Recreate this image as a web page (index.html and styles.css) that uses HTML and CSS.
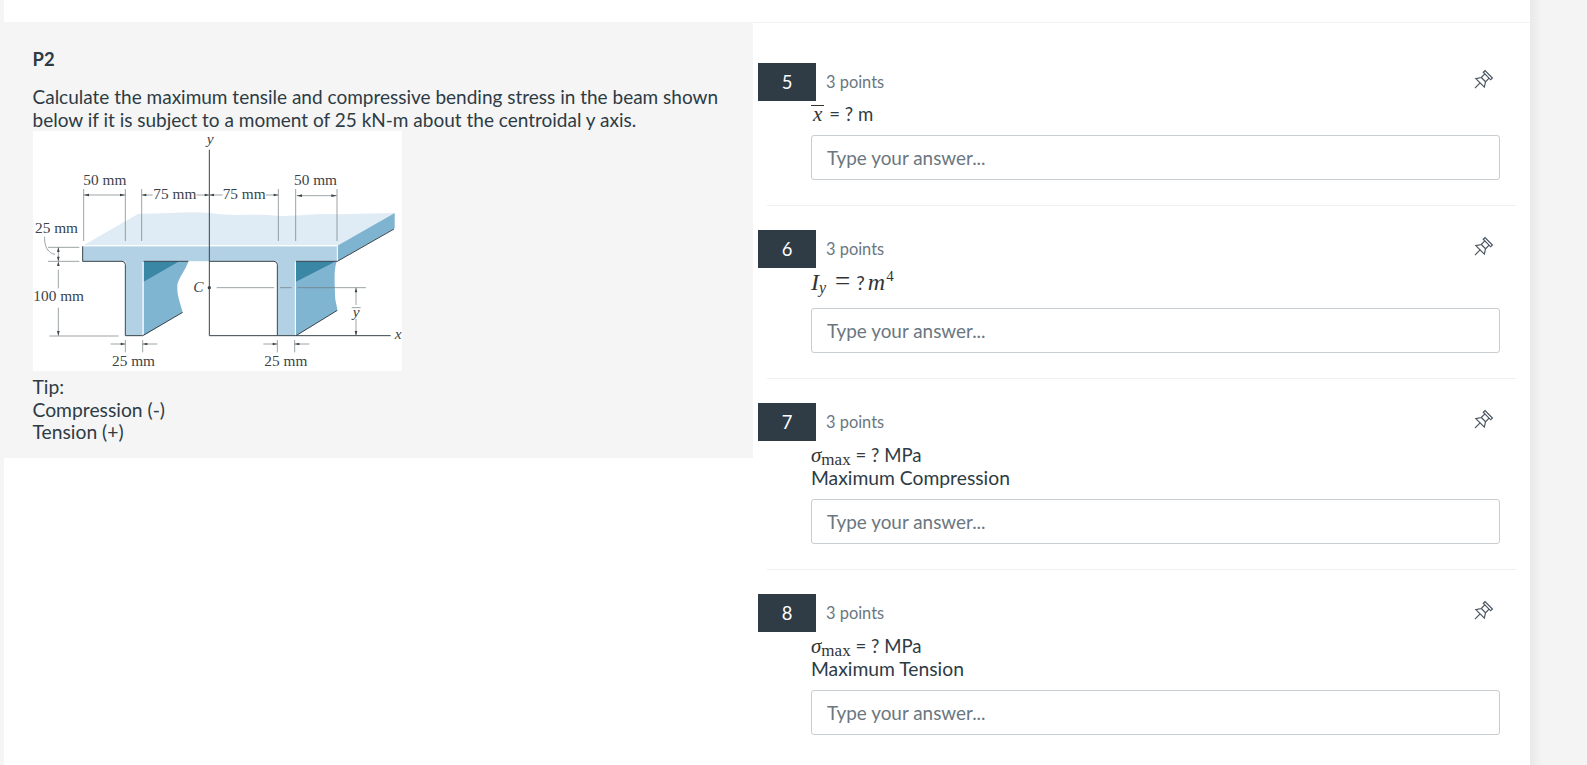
FILE: index.html
```html
<!DOCTYPE html>
<html lang="en">
<head>
<meta charset="utf-8">
<title>P2</title>
<link rel="stylesheet" href="styles.css">
</head>
<body>
<div class="app">
  <div class="edge"></div>
  <main class="main">
    <section class="passage">
      <h2 class="title">P2</h2>
      <p class="para">Calculate the maximum tensile and compressive bending stress in the beam shown below if it is subject to a moment of 25 kN-m about the centroidal y axis.</p>
      <svg class="figure" viewBox="39 18 1107 720" width="369" height="240">
        <rect x="39" y="18" width="1107" height="720" fill="#fff"/>
        <path d="M188 362 L355 266 C430 268 500 258 570 264 C640 276 700 264 770 272 C830 276 880 264 960 268 L1124 264 L952 362 Z" fill="#e0ecf5"/>
        <path d="M952 362 L1124 264 L1124 310 L952 409 Z" fill="#7fb4d0"/>
        <path d="M371 409 L505 409 C500 430 475 460 472 480 C470 510 480 530 488 562 L371 632 Z" fill="#80b5d2"/>
        <path d="M371 409 L478 409 L371 470 Z" fill="#3a87a5"/>
        <path d="M828 409 L950 409 C940 440 945 480 945 510 C945 530 952 545 952 556 L828 632 Z" fill="#80b5d2"/>
        <path d="M828 409 L948 409 L828 470 Z" fill="#3a87a5"/>
        <path d="M188 364 H952 V409 H827 V632 H772 V409 H370 V632 H317 V409 H188 Z" fill="#b3d1e5"/>
        <g fill="none" stroke="#fff" stroke-width="3">
          <path d="M188 362 H952 V409"/>
          <path d="M369 411 V632"/>
          <path d="M826 411 V632"/>
        </g>
        <g fill="none" stroke="#3a444a" stroke-width="3">
          <path d="M188 364 V409 H306 Q316 409 316 419 V632 H368 L488 562"/>
          <path d="M371 409 H505"/>
          <path d="M568 74 V632 H772 V419 Q772 409 762 409 H568"/>
          <path d="M828 409 H952 L1122 312"/>
          <path d="M772 632 H1112"/>
          <path d="M828 632 L952 556"/>
        </g>
        <g fill="none" stroke="#6d7579" stroke-width="2">
          <path d="M191 192 V348 M316 192 V348 M365 192 V348 M775 192 V348 M827 192 V348 M951 192 V348"/>
          <path d="M191 210 H316 M830 212 H950"/>
          <path d="M365 210 H398 M530 210 H608 M738 210 H775"/>
          <path d="M84 367 H178 M84 409 H178"/>
          <path d="M115 367 V409 M115 434 V490 M115 548 V632 M88 633 H296"/>
          <path d="M74 335 C72 365 85 385 105 388"/>
          <path d="M272 657 H316 M316 645 V682 M368 645 V682 M368 657 H412"/>
          <path d="M730 657 H772 M772 645 V682 M824 645 V682 M824 657 H868"/>
          <path d="M590 488 H762 M780 488 H815 M832 488 H1038"/>
          <path d="M1008 488 V540 M1008 582 V632 M995 548 H1022"/>
        </g>
        <g fill="#3a444a">
          <path d="M191 210 l16 -4 v8z M316 210 l-16 -4 v8z M830 212 l16 -4 v8z M950 212 l-16 -4 v8z"/>
          <path d="M365 210 l14 -4 v8z M775 210 l-14 -4 v8z M568 210 l-14 -4 v8z M568 210 l14 -4 v8z"/>
          <path d="M115 367 l-4 14 h8z M115 409 l-4 -14 h8z M115 409 l-4 14 h8z M115 632 l-4 -14 h8z"/>
          <path d="M316 657 l-14 -4 v8z M368 657 l14 -4 v8z M772 657 l-14 -4 v8z M824 657 l14 -4 v8z"/>
          <path d="M1008 488 l-4 14 h8z M1008 632 l-4 -14 h8z"/>
          <circle cx="568" cy="488" r="5"/>
        </g>
        <g class="fig-label">
          <text x="190" y="180">50 mm</text>
          <text x="822" y="180">50 mm</text>
          <text x="400" y="222">75 mm</text>
          <text x="608" y="222">75 mm</text>
          <text x="45" y="325">25 mm</text>
          <text x="40" y="527">100 mm</text>
          <text x="276" y="723">25 mm</text>
          <text x="733" y="723">25 mm</text>
        </g>
        <g class="fig-italic">
          <text x="560" y="56">y</text>
          <text x="520" y="502">C</text>
          <text x="998" y="576">y</text>
          <text x="1124" y="642">x</text>
        </g>
      </svg>
      <p class="para tip">Tip:<br>Compression (-)<br>Tension (+)</p>
    </section>
    <section class="questions">
      <article class="question">
        <header class="q-head">
          <span class="q-num">5</span>
          <span class="q-points">3 points</span>
          <svg class="pin" viewBox="0 0 20 20" width="20" height="20"><use href="#pin-shape"/></svg>
        </header>
        <div class="q-text"><span class="math"><i class="over">x</i></span> <span class="eq">= ? m</span></div>
        <div class="answer">Type your answer...</div>
      </article>
      <article class="question">
        <header class="q-head">
          <span class="q-num">6</span>
          <span class="q-points">3 points</span>
          <svg class="pin" viewBox="0 0 20 20" width="20" height="20"><use href="#pin-shape"/></svg>
        </header>
        <div class="q-text q-text-tall"><span class="math big"><i>I<sub>y</sub></i><span class="rel">=</span><span class="q-mark">?</span><i>m</i><sup>4</sup></span></div>
        <div class="answer">Type your answer...</div>
      </article>
      <article class="question">
        <header class="q-head">
          <span class="q-num">7</span>
          <span class="q-points">3 points</span>
          <svg class="pin" viewBox="0 0 20 20" width="20" height="20"><use href="#pin-shape"/></svg>
        </header>
        <div class="q-text q-text-double"><span class="math"><i>σ</i><sub>max</sub></span> <span class="eq">= ? MPa</span><br>Maximum Compression</div>
        <div class="answer">Type your answer...</div>
      </article>
      <article class="question">
        <header class="q-head">
          <span class="q-num">8</span>
          <span class="q-points">3 points</span>
          <svg class="pin" viewBox="0 0 20 20" width="20" height="20"><use href="#pin-shape"/></svg>
        </header>
        <div class="q-text q-text-double"><span class="math"><i>σ</i><sub>max</sub></span> <span class="eq">= ? MPa</span><br>Maximum Tension</div>
        <div class="answer">Type your answer...</div>
      </article>
    </section>
  </main>
  <div class="rail"></div>
</div>
<svg class="defs" width="0" height="0">
  <defs>
    <g id="pin-shape" fill="none" stroke="#4a5560" stroke-width="1.2">
      <g transform="rotate(45 10 10)">
        <path d="M4.8 0.5 H15.2 V3 H4.8 Z"/>
        <path d="M7 3 V8 L4 12.7 H16 L13 8 V3"/>
        <path d="M7 8 H13"/>
        <path d="M10 12.7 V20"/>
      </g>
    </g>
  </defs>
</svg>
</body>
</html>
```
FILE: styles.css
```css
* { box-sizing: border-box; }
html, body { margin: 0; height: 765px; overflow: hidden; }
body {
  font-family: "Lato", "Noto Sans", sans-serif;
  color: #2d3b45;
  background: #f5f5f5;
}
.app { display: flex; height: 765px; }
.edge { width: 4px; background: #f5f5f5; flex: none; }
.main {
  width: 1526px;
  flex: none;
  display: flex;
  align-items: flex-start;
  background: #fff;
  padding-top: 22px;
  height: 765px;
}
.rail {
  flex: 1;
  background: linear-gradient(to right, #e9e9e9, #f4f4f4 12px);
}
.passage {
  width: 749px;
  flex: none;
  height: 436px;
  background: #f5f5f5;
  padding: 26px 29px 0 28.5px;
  font-size: 19px;
  line-height: 22.6px;
}
.title {
  margin: 0 0 15px;
  font-size: 18.4px;
  line-height: 23px;
  font-weight: 700;
  color: #2d3b45;
}
.para { margin: 0; }
.tip { margin-top: 5px; font-size: 19.3px; }
.figure { display: block; margin-left: 0.5px; }
.fig-label text { font-family: "Liberation Serif", serif; font-size: 46px; fill: #3a444a; }
.fig-italic text { font-family: "Liberation Serif", serif; font-size: 46px; font-style: italic; fill: #3a444a; }
.questions {
  flex: 1;
  height: 743px;
  border-top: 1px solid #f2f2f2;
  padding-top: 40px;
}
.question {
  padding: 0 30px 26px 5px;
  margin-bottom: 24px;
  position: relative;
}
.question::after {
  content: "";
  position: absolute;
  left: 14px;
  right: 14px;
  bottom: 0;
  height: 1px;
  background: #f0f0f0;
}
.question:last-child::after { display: none; }
.q-head { display: flex; align-items: center; height: 38px; }
.q-num {
  width: 58px;
  height: 38px;
  background: #2f3c46;
  color: #fff;
  font-size: 18.4px;
  line-height: 38px;
  text-align: center;
  flex: none;
}
.q-points {
  margin-left: 10px;
  margin-top: -1px;
  font-size: 16.4px;
  color: #6b7780;
  flex: 1;
}
.pin { flex: none; margin-right: 8px; margin-top: -2px; overflow: visible; }
.q-text {
  margin: 0 0 10px 53px;
  padding-top: 1px;
  font-size: 19.3px;
  line-height: 23px;
  height: 24px;
}
.q-text-tall { height: 30px; line-height: 29px; padding-top: 0; }
.q-text-double { padding-top: 2px; height: 48px; }
.math { font-family: "Liberation Serif", serif; font-size: 21px; line-height: 0; color: #333; }
.math sub { font-size: 17px; line-height: 0; vertical-align: -3px; font-style: normal; }
.math sup { font-size: 15px; line-height: 0; margin-left: 1px; }
.big { font-size: 24px; }
.big sub { font-size: 16px; font-style: italic; }
.rel { margin: 0 6px 0 9px; font-size: 27px; line-height: 0; }
.q-mark { margin: 0 3px 0 0; font-family: "Lato", sans-serif; font-size: 19px; }
.over { border-top: 1px solid #333; padding: 0 2px; line-height: 17px; display: inline-block; }
.eq { font-size: 18.6px; line-height: 0; }
.answer {
  margin-left: 53px;
  height: 45px;
  border: 1px solid #c7cdd1;
  border-radius: 3px;
  padding: 0 15px;
  font-size: 18.9px;
  line-height: 44px;
  color: #6b7780;
  background: #fff;
}
.defs { position: absolute; }
```
